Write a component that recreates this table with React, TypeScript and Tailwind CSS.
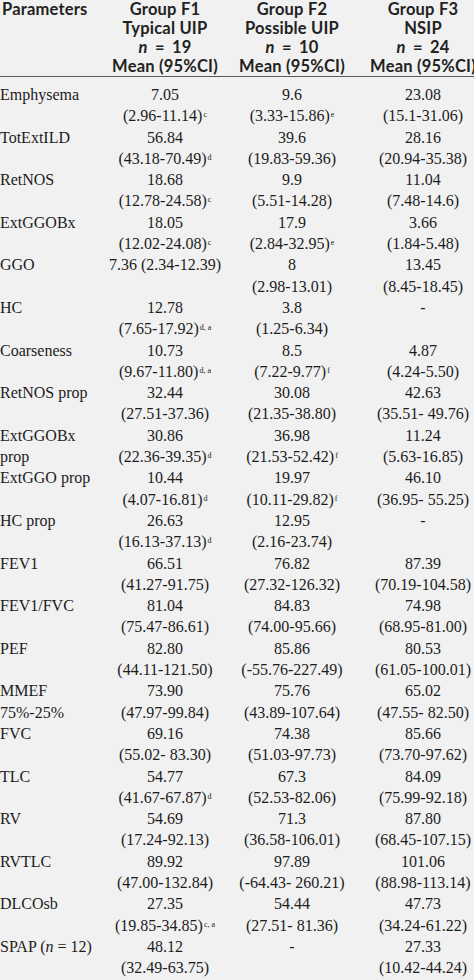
import React from 'react';

// [value, ci, sup] for each group
type Cell = [string, string, string?];

type Row = {
  label: React.ReactNode;
  cells: [Cell, Cell, Cell];
};

const rows: Row[] = [
  { label: 'Emphysema', cells: [['7.05', '(2.96-11.14)', 'c'], ['9.6', '(3.33-15.86)', 'e'], ['23.08', '(15.1-31.06)']] },
  { label: 'TotExtILD', cells: [['56.84', '(43.18-70.49)', 'd'], ['39.6', '(19.83-59.36)'], ['28.16', '(20.94-35.38)']] },
  { label: 'RetNOS', cells: [['18.68', '(12.78-24.58)', 'c'], ['9.9', '(5.51-14.28)'], ['11.04', '(7.48-14.6)']] },
  { label: 'ExtGGOBx', cells: [['18.05', '(12.02-24.08)', 'c'], ['17.9', '(2.84-32.95)', 'e'], ['3.66', '(1.84-5.48)']] },
  { label: 'GGO', cells: [['7.36 (2.34-12.39)', ''], ['8', '(2.98-13.01)'], ['13.45', '(8.45-18.45)']] },
  { label: 'HC', cells: [['12.78', '(7.65-17.92)', 'd, a'], ['3.8', '(1.25-6.34)'], ['-', '']] },
  { label: 'Coarseness', cells: [['10.73', '(9.67-11.80)', 'd, a'], ['8.5', '(7.22-9.77)', 'f'], ['4.87', '(4.24-5.50)']] },
  { label: 'RetNOS prop', cells: [['32.44', '(27.51-37.36)'], ['30.08', '(21.35-38.80)'], ['42.63', '(35.51- 49.76)']] },
  { label: <>ExtGGOBx<br />prop</>, cells: [['30.86', '(22.36-39.35)', 'd'], ['36.98', '(21.53-52.42)', 'f'], ['11.24', '(5.63-16.85)']] },
  { label: 'ExtGGO prop', cells: [['10.44', '(4.07-16.81)', 'd'], ['19.97', '(10.11-29.82)', 'f'], ['46.10', '(36.95- 55.25)']] },
  { label: 'HC prop', cells: [['26.63', '(16.13-37.13)', 'd'], ['12.95', '(2.16-23.74)'], ['-', '']] },
  { label: 'FEV1', cells: [['66.51', '(41.27-91.75)'], ['76.82', '(27.32-126.32)'], ['87.39', '(70.19-104.58)']] },
  { label: 'FEV1/FVC', cells: [['81.04', '(75.47-86.61)'], ['84.83', '(74.00-95.66)'], ['74.98', '(68.95-81.00)']] },
  { label: 'PEF', cells: [['82.80', '(44.11-121.50)'], ['85.86', '(-55.76-227.49)'], ['80.53', '(61.05-100.01)']] },
  { label: <>MMEF<br />75%-25%</>, cells: [['73.90', '(47.97-99.84)'], ['75.76', '(43.89-107.64)'], ['65.02', '(47.55- 82.50)']] },
  { label: 'FVC', cells: [['69.16', '(55.02- 83.30)'], ['74.38', '(51.03-97.73)'], ['85.66', '(73.70-97.62)']] },
  { label: 'TLC', cells: [['54.77', '(41.67-67.87)', 'd'], ['67.3', '(52.53-82.06)'], ['84.09', '(75.99-92.18)']] },
  { label: 'RV', cells: [['54.69', '(17.24-92.13)'], ['71.3', '(36.58-106.01)'], ['87.80', '(68.45-107.15)']] },
  { label: 'RVTLC', cells: [['89.92', '(47.00-132.84)'], ['97.89', '(-64.43- 260.21)'], ['101.06', '(88.98-113.14)']] },
  { label: 'DLCOsb', cells: [['27.35', '(19.85-34.85)', 'c, a'], ['54.44', '(27.51- 81.36)'], ['47.73', '(34.24-61.22)']] },
  { label: <>SPAP (<i>n</i> = 12)</>, cells: [['48.12', '(32.49-63.75)'], ['-', ''], ['27.33', '(10.42-44.24)']] },
];

const groups = [
  { name: 'Group F1', kind: 'Typical UIP', n: 19 },
  { name: 'Group F2', kind: 'Possible UIP', n: 10 },
  { name: 'Group F3', kind: 'NSIP', n: 24 },
];

const grid = 'grid grid-cols-[107px_116px_138px_124px]';

const ValueCell = ({ cell }: { cell: Cell }) => (
  <div className="text-center whitespace-nowrap">
    <div>{cell[0]}</div>
    <div className="h-[21.3px]">
      {cell[1]}
      {cell[2] && <sup className="text-[8px] ml-[1px]">{cell[2]}</sup>}
    </div>
  </div>
);

export default function App() {
  return (
    <div className="min-h-screen w-[474px] overflow-hidden bg-[#f1f1f1] text-[#1c1c1c]">
      {/* header */}
      <div className={`${grid} font-['Lato',sans-serif] font-bold text-[16.5px] leading-[19px] tracking-[0.2px] text-[#222]`}>
        <div className="pl-[2px]">Parameters</div>
        {groups.map((g) => (
          <div key={g.name} className="text-center whitespace-nowrap">
            <div>{g.name}</div>
            <div>{g.kind}</div>
            <div className="[word-spacing:3px]">
              <i>n</i> = {g.n}
            </div>
            <div>Mean (95%CI)</div>
          </div>
        ))}
      </div>
      <div className="h-px bg-[#5a5a5a]" />

      {/* body */}
      <div className="pt-[7px] font-['Liberation_Serif',serif] text-[16px] leading-[21.3px]">
        {rows.map((r, i) => (
          <div key={i} className={grid}>
            <div className="whitespace-nowrap">{r.label}</div>
            {r.cells.map((c, j) => (
              <ValueCell key={j} cell={c} />
            ))}
          </div>
        ))}
      </div>
    </div>
  );
}
